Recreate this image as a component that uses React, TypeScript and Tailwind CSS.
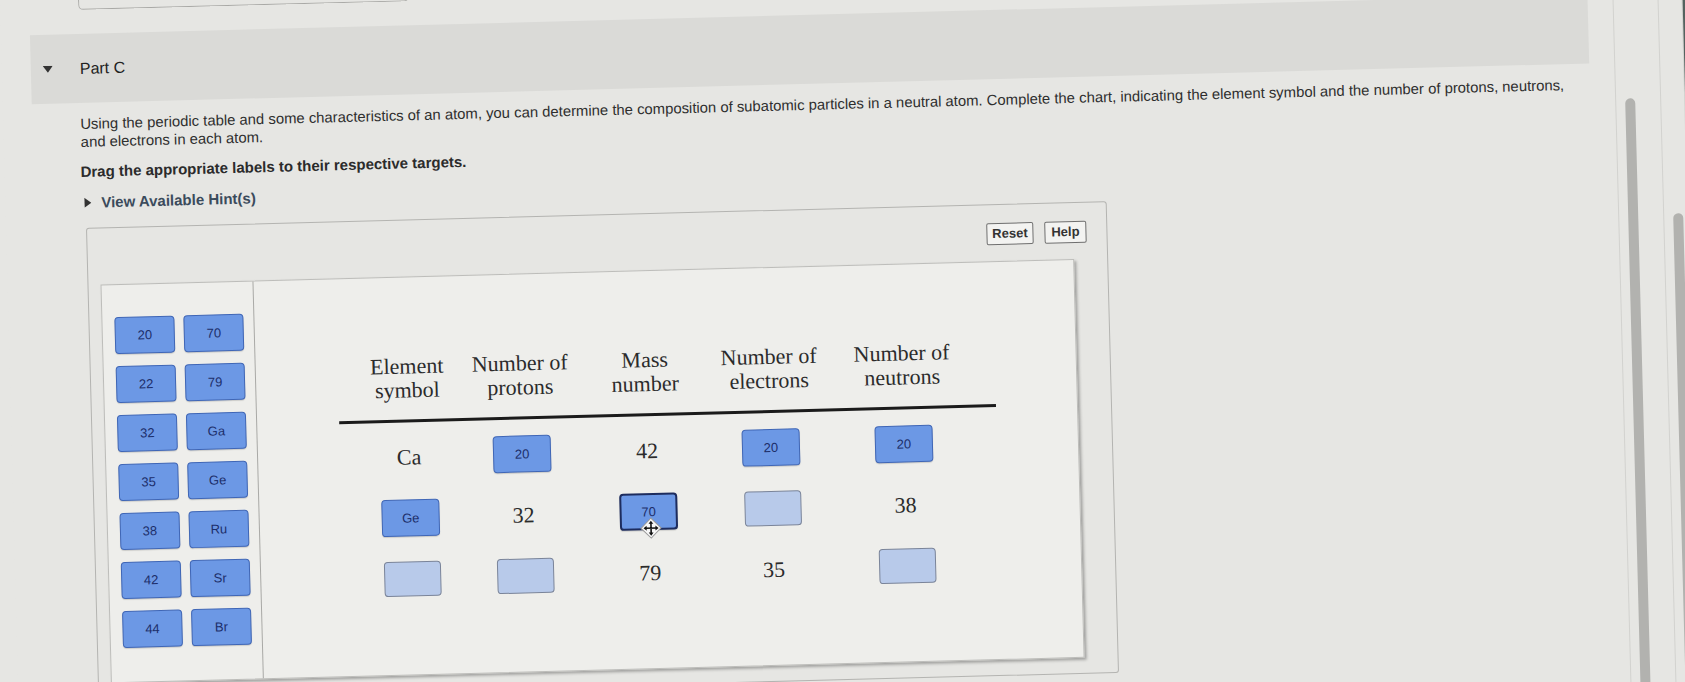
import React from "react";

const bank: [string, string][] = [
  ["20", "70"],
  ["22", "79"],
  ["32", "Ga"],
  ["35", "Ge"],
  ["38", "Ru"],
  ["42", "Sr"],
  ["44", "Br"],
];

function Tile({ label, w = "w-[58px]", focused = false }: { label: string; w?: string; focused?: boolean }) {
  return (
    <div
      className={
        (focused
          ? "border-2 border-[#1d2c5e] "
          : "border border-[#3f66b6] ") +
        w +
        " h-[37px] rounded-[4px] bg-[#6c98e5] flex items-center justify-center text-[13px] text-[#1c2e6a] font-['Liberation_Sans',Arial,sans-serif] shadow-[0_1px_1px_rgba(0,0,0,0.15)]"
      }
    >
      {label}
    </div>
  );
}

function Empty() {
  return (
    <div className="w-[57px] h-[35px] rounded-[4px] border border-[#7a8499] bg-[#b8caea]" />
  );
}

function Serif({ children }: { children: React.ReactNode }) {
  return (
    <span className="text-[22px] leading-[24px] text-[#2b2b2b] font-['Liberation_Serif','Times_New_Roman',serif]">
      {children}
    </span>
  );
}

function MoveCursor() {
  return (
    <svg width="22" height="22" viewBox="0 0 22 22">
      <path d="M11 1 L21 11 L11 21 L1 11 Z" fill="#f7f7f7" stroke="#9a9a9a" strokeWidth="1" />
      <path d="M11 5 L11 17 M5 11 L17 11" stroke="#111" strokeWidth="1.6" />
      <path
        d="M11 3.5 L8.6 6.6 L13.4 6.6 Z M11 18.5 L8.6 15.4 L13.4 15.4 Z M3.5 11 L6.6 8.6 L6.6 13.4 Z M18.5 11 L15.4 8.6 L15.4 13.4 Z"
        fill="#111"
      />
    </svg>
  );
}

const cols = "grid grid-cols-[110px_116px_134px_114px_152px] pl-[14px]";

export default function App() {
  return (
    <div className="w-[1685px] h-[682px] overflow-hidden bg-[#e6e6e3] font-['Liberation_Sans',Arial,sans-serif]">
      <div className="w-[1720px] h-[760px] origin-top-left rotate-[-1.5deg] bg-[#e6e6e3] flex">
        {/* main column */}
        <div className="w-[1612px] flex flex-col">
          {/* previous part box */}
          <div className="ml-[78px] mt-[-6px] h-[18px] w-[331px] border border-t-0 border-[#a9a9a6] rounded-b-[5px]" />

          {/* Part C band */}
          <div className="mt-[24px] ml-[29px] w-[1558px] h-[69px] bg-[#dadad7] flex items-center pl-[12px]">
            <svg width="10" height="7" viewBox="0 0 10 7">
              <path d="M0 0 L10 0 L5 7 Z" fill="#333" />
            </svg>
            <span className="ml-[27px] text-[16px] text-[#222]">Part C</span>
          </div>

          {/* description */}
          <p className="ml-[77px] mt-[12px] text-[14.85px] leading-[18px] text-[#2e2e2e] whitespace-nowrap">
            Using the periodic table and some characteristics of an atom, you can determine the composition of subatomic particles in a neutral atom. Complete the chart, indicating the element symbol and the number of protons, neutrons,
            <br />
            and electrons in each atom.
          </p>
          <p className="ml-[76px] mt-[12px] text-[15px] leading-[18px] font-bold text-[#2b2b2b]">
            Drag the appropriate labels to their respective targets.
          </p>
          <div className="ml-[79px] mt-[13px] flex items-center h-[18px]">
            <svg width="7" height="10" viewBox="0 0 7 10">
              <path d="M0 0 L7 5 L0 10 Z" fill="#333" />
            </svg>
            <span className="ml-[10px] text-[15px] font-bold text-[#3b4b5c]">View Available Hint(s)</span>
          </div>

          {/* interactive box */}
          <div className="ml-[80px] mt-[16px] w-[1021px] h-[472px] border border-[#b4b4b1] rounded-[3px] flex flex-col">
            <div className="flex justify-end gap-[11px] pt-[18px] pr-[20px]">
              <button className="w-[47px] h-[22px] border border-[#6f6f6f] rounded-[2px] bg-[#f3f3f1] text-[13px] font-bold text-[#333]">
                Reset
              </button>
              <button className="w-[42px] h-[22px] border border-[#6f6f6f] rounded-[2px] bg-[#f3f3f1] text-[13px] font-bold text-[#333]">
                Help
              </button>
            </div>

            {/* inner panel */}
            <div className="ml-[12px] mt-[16px] w-[974px] h-[399px] border border-[#bdbdba] bg-[#eeeeeb] shadow-[2px_2px_3px_rgba(0,0,0,0.3)] flex">
              {/* label bank */}
              <div className="w-[152px] h-full border-r border-[#a9a9a6] pl-[12px] pt-[32px] flex flex-col gap-[12px]">
                {bank.map(([a, b]) => (
                  <div key={a} className="flex gap-[9px]">
                    <Tile label={a} w="w-[60px]" />
                    <Tile label={b} w="w-[60px]" />
                  </div>
                ))}
              </div>

              {/* chart */}
              <div className="ml-[82px] mt-[77px] w-[657px] flex flex-col">
                <div className={cols}>
                  {[
                    ["Element", "symbol"],
                    ["Number of", "protons"],
                    ["Mass", "number"],
                    ["Number of", "electrons"],
                    ["Number of", "neutrons"],
                  ].map(([l1, l2]) => (
                    <div key={l1 + l2} className="flex flex-col items-center whitespace-nowrap">
                      <Serif>{l1}</Serif>
                      <Serif>{l2}</Serif>
                    </div>
                  ))}
                </div>
                <div className="mt-[17px] h-[3px] bg-[#1b1b1b]" />
                <div className="mt-[4px] flex flex-col">
                  <div className={cols + " h-[61px] items-center"}>
                    <div className="flex justify-center"><Serif>Ca</Serif></div>
                    <div className="flex justify-center"><Tile label="20" /></div>
                    <div className="flex justify-center"><Serif>42</Serif></div>
                    <div className="flex justify-center"><Tile label="20" /></div>
                    <div className="flex justify-center"><Tile label="20" /></div>
                  </div>
                  <div className={cols + " h-[61px] items-center"}>
                    <div className="flex justify-center"><Tile label="Ge" /></div>
                    <div className="flex justify-center"><Serif>32</Serif></div>
                    <div className="flex justify-center">
                      <div className="relative">
                        <Tile label="70" focused />
                        <div className="absolute left-[20px] top-[24px]">
                          <MoveCursor />
                        </div>
                      </div>
                    </div>
                    <div className="flex justify-center"><Empty /></div>
                    <div className="flex justify-center"><Serif>38</Serif></div>
                  </div>
                  <div className={cols + " h-[61px] items-center"}>
                    <div className="flex justify-center"><Empty /></div>
                    <div className="flex justify-center"><Empty /></div>
                    <div className="flex justify-center"><Serif>79</Serif></div>
                    <div className="flex justify-center"><Serif>35</Serif></div>
                    <div className="flex justify-center"><Empty /></div>
                  </div>
                </div>
              </div>
            </div>
          </div>
        </div>

        {/* right side scroll tracks */}
        <div className="flex h-full">
          <div className="w-[1px] h-full bg-[#d2d2cf]" />
          <div className="w-[44px] h-full pt-[141px] pl-[9px]">
            <div className="w-[10px] h-full rounded-full bg-[#b2b2af]" />
          </div>
          <div className="w-[1px] h-full bg-[#d2d2cf]" />
          <div className="w-[23px] h-full pt-[257px] pl-[9px]">
            <div className="w-[10px] h-full rounded-full bg-[#b2b2af]" />
          </div>
          <div className="w-[1px] h-full bg-[#d2d2cf]" />
          <div className="w-[10px] h-full bg-[#55625f]" />
        </div>
      </div>
    </div>
  );
}
